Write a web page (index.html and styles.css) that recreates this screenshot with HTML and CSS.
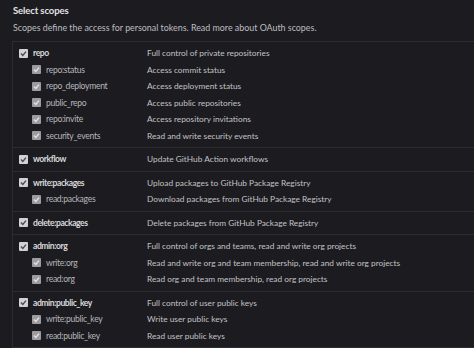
FILE: index.html
```html
<!DOCTYPE html>
<html>
<head>
<meta charset="utf-8">
<link rel="stylesheet" href="styles.css">
</head>
<body>
<div class="page">
  <div class="title">Select scopes</div>
  <div class="subtitle">Scopes define the access for personal tokens. Read more about OAuth scopes.</div>
  <div class="box">
    <div class="group">
      <div class="row top"><span class="cb"><svg viewBox="0 0 9 9"><path d="M2 4.6 L3.8 6.4 L7 2.6" /></svg></span><span class="name">repo</span><span class="desc">Full control of private repositories</span></div>
      <div class="row sub"><span class="cb"><svg viewBox="0 0 9 9"><path d="M2 4.6 L3.8 6.4 L7 2.6" /></svg></span><span class="name">repo:status</span><span class="desc">Access commit status</span></div>
      <div class="row sub"><span class="cb"><svg viewBox="0 0 9 9"><path d="M2 4.6 L3.8 6.4 L7 2.6" /></svg></span><span class="name">repo_deployment</span><span class="desc">Access deployment status</span></div>
      <div class="row sub"><span class="cb"><svg viewBox="0 0 9 9"><path d="M2 4.6 L3.8 6.4 L7 2.6" /></svg></span><span class="name">public_repo</span><span class="desc">Access public repositories</span></div>
      <div class="row sub"><span class="cb"><svg viewBox="0 0 9 9"><path d="M2 4.6 L3.8 6.4 L7 2.6" /></svg></span><span class="name">repo:invite</span><span class="desc">Access repository invitations</span></div>
      <div class="row sub"><span class="cb"><svg viewBox="0 0 9 9"><path d="M2 4.6 L3.8 6.4 L7 2.6" /></svg></span><span class="name">security_events</span><span class="desc">Read and write security events</span></div>
    </div>
    <div class="group">
      <div class="row top"><span class="cb"><svg viewBox="0 0 9 9"><path d="M2 4.6 L3.8 6.4 L7 2.6" /></svg></span><span class="name">workflow</span><span class="desc">Update GitHub Action workflows</span></div>
    </div>
    <div class="group">
      <div class="row top"><span class="cb"><svg viewBox="0 0 9 9"><path d="M2 4.6 L3.8 6.4 L7 2.6" /></svg></span><span class="name">write:packages</span><span class="desc">Upload packages to GitHub Package Registry</span></div>
      <div class="row sub"><span class="cb"><svg viewBox="0 0 9 9"><path d="M2 4.6 L3.8 6.4 L7 2.6" /></svg></span><span class="name">read:packages</span><span class="desc">Download packages from GitHub Package Registry</span></div>
    </div>
    <div class="group">
      <div class="row top"><span class="cb"><svg viewBox="0 0 9 9"><path d="M2 4.6 L3.8 6.4 L7 2.6" /></svg></span><span class="name">delete:packages</span><span class="desc">Delete packages from GitHub Package Registry</span></div>
    </div>
    <div class="group">
      <div class="row top"><span class="cb"><svg viewBox="0 0 9 9"><path d="M2 4.6 L3.8 6.4 L7 2.6" /></svg></span><span class="name">admin:org</span><span class="desc">Full control of orgs and teams, read and write org projects</span></div>
      <div class="row sub"><span class="cb"><svg viewBox="0 0 9 9"><path d="M2 4.6 L3.8 6.4 L7 2.6" /></svg></span><span class="name">write:org</span><span class="desc">Read and write org and team membership, read and write org projects</span></div>
      <div class="row sub"><span class="cb"><svg viewBox="0 0 9 9"><path d="M2 4.6 L3.8 6.4 L7 2.6" /></svg></span><span class="name">read:org</span><span class="desc">Read org and team membership, read org projects</span></div>
    </div>
    <div class="group">
      <div class="row top"><span class="cb"><svg viewBox="0 0 9 9"><path d="M2 4.6 L3.8 6.4 L7 2.6" /></svg></span><span class="name">admin:public_key</span><span class="desc">Full control of user public keys</span></div>
      <div class="row sub"><span class="cb"><svg viewBox="0 0 9 9"><path d="M2 4.6 L3.8 6.4 L7 2.6" /></svg></span><span class="name">write:public_key</span><span class="desc">Write user public keys</span></div>
      <div class="row sub"><span class="cb"><svg viewBox="0 0 9 9"><path d="M2 4.6 L3.8 6.4 L7 2.6" /></svg></span><span class="name">read:public_key</span><span class="desc">Read user public keys</span></div>
    </div>
  </div>
</div>
</body>
</html>
```
FILE: styles.css
```css
html, body {
  margin: 0;
  padding: 0;
  background: #1c1c20;
  overflow: hidden;
}
.page {
  padding: 4px 0 0 13px;
  font-family: Lato, "Open Sans", sans-serif;
  color: #cfcfd2;
}
.title {
  font-size: 9.6px;
  font-weight: 700;
  line-height: 14px;
  letter-spacing: -0.15px;
  color: #e2e2e4;
}
.subtitle {
  font-size: 8.9px;
  line-height: 14px;
  margin-top: 3px;
  color: #bcbcc0;
}
.box {
  margin-top: 6px;
  margin-left: -1px;
  border: 1px solid #2c2c31;
  border-right: none;
}
.group {
  padding: 3px 0;
}
.group + .group {
  border-top: 1px solid #2c2c31;
}
.row {
  display: flex;
  align-items: center;
  height: 16.5px;
  font-size: 8.3px;
  padding-left: 6px;
}
.row.sub {
  padding-left: 19px;
}
.cb {
  width: 9px;
  height: 9px;
  border-radius: 1px;
  background: #d2d2d4;
  flex: none;
  display: flex;
}
.cb svg {
  width: 9px;
  height: 9px;
  fill: none;
  stroke: #4a4a50;
  stroke-width: 1.4;
}
.sub .cb {
  background: #9c9ca0;
}
.sub .cb svg {
  stroke: #e2e2e4;
}
.name {
  margin-left: 5px;
  width: 114px;
  flex: none;
  font-size: 8.6px;
  letter-spacing: -0.3px;
  color: #c8c8cc;
}
.sub .name {
  width: 101px;
  color: #b6b6ba;
}
.top .name {
  font-weight: 700;
  letter-spacing: -0.45px;
  color: #d8d8da;
}
.desc {
  color: #c2c2c6;
}
```
